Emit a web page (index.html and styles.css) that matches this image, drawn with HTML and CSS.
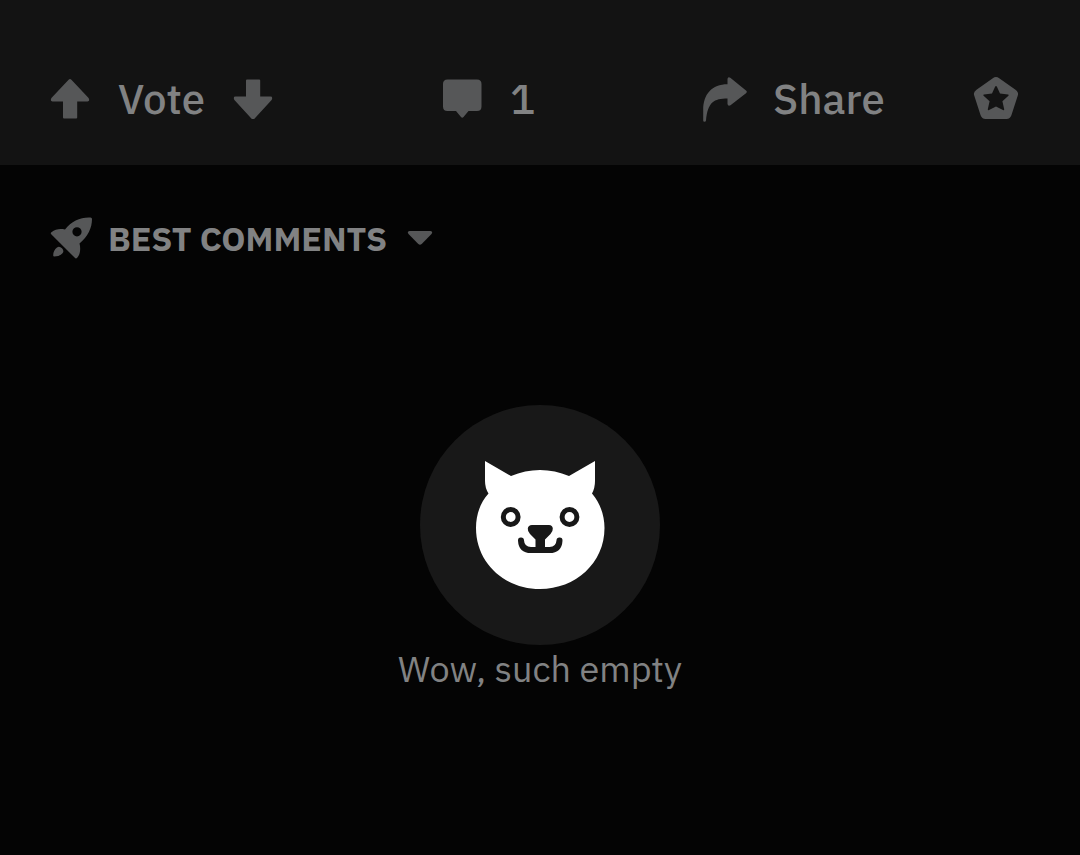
FILE: index.html
```
<!DOCTYPE html>
<html lang="en">
<head>
    <meta charset="UTF-8">
    <meta name="viewport" content="width=device-width, initial-scale=1.0">
    <title>Comments</title>
    <link rel="stylesheet" href="styles.css">
</head>
<body>
    <div class="action-bar">
        <div class="action-group">
            <button type="button" class="action" aria-label="Upvote">
                <svg class="icon" viewBox="0 0 40 40">
                    <path d="M18.6 .8Q20-.6 21.4 .8L38.6 19Q40.2 22.5 37.5 22.5H27.2V38.5Q27.2 39.5 26.2 39.5H14Q13 39.5 13 38.5V22.5H2.5Q-.2 22.5 1.4 19Z"/>
                </svg>
            </button>
            <span>Vote</span>
            <button type="button" class="action" aria-label="Downvote">
                <svg class="icon" viewBox="0 0 40 40">
                    <path d="M18.6 39.7Q20 41 21.4 39.7L38.6 21Q40.2 17.5 37.5 17.5H27.2V1.5Q27.2 .5 26.2 .5H14Q13 .5 13 1.5V17.5H2.5Q-.2 17.5 1.4 21Z"/>
                </svg>
            </button>
        </div>
        <button type="button" class="action" aria-label="1 comment">
            <svg class="icon" viewBox="0 0 40 40">
                <path d="M5.5 .5H35Q39.5 .5 39.5 5V27.5Q39.5 32 35 32H26.5L21.5 38Q20.2 39.3 19 38L14 32H5.5Q1 32 1 27.5V5Q1 .5 5.5 .5Z"/>
            </svg>
            <span>1</span>
        </button>
        <button type="button" class="action action-share">
            <svg class="icon icon-large" viewBox="0 0 48 48">
                <path d="M3.2 45.5V35C3.2 19 12 9.2 27.5 9.2V4Q27.8 1.3 30.3 2.7L46.3 15.7Q47.5 16.8 46.3 18L30.5 30.3Q28 31.6 27.5 29V23.5C14 23.5 7.8 27 6 45.5Q5.8 46.7 4.5 46.7Q3.2 46.7 3.2 45.5Z"/>
            </svg>
            <span>Share</span>
        </button>
        <button type="button" class="action" aria-label="Give award">
            <svg class="icon icon-large" viewBox="0 0 48 48">
                <path fill-rule="evenodd" d="M20.8 3.2Q24 .8 27.2 3.2L43.5 14.8Q47 17.2 45.8 20.5L39.4 40.3Q38.2 44 34.5 44H13.5Q9.8 44 8.6 40.3L2.2 20.5Q1 17.2 4.5 14.8ZM23.2 11.6L20 18.6L12 19.5Q10.8 19.8 11.6 20.8L17.6 26.2L15.8 34.2Q15.8 35.6 17 35L24 31.4L31 35Q32.2 35.6 32.2 34.2L30.4 26.2L36.4 20.8Q37.2 19.8 36 19.5L28 18.6L24.8 11.6Q24 10.2 23.2 11.6Z"/>
            </svg>
        </button>
    </div>

    <div class="comments">
        <button type="button" class="sort">
            <svg class="icon icon-rocket" viewBox="0 0 44 44">
                <path fill-rule="evenodd" d="M40.5 1.5Q42 1.5 42 3C42 12 38 20.5 29.5 27.5C31 33 30 39 27.2 41.7Q26 43 24.8 41.8L1.2 18.3Q.2 17.3 1.4 16.2C5.5 13 10 12.5 15 13.5C21.5 5 30.5 1 40.5 1.5ZM27 11.2A4.6 4.6 0 1 0 27 20.4A4.6 4.6 0 1 0 27 11.2Z"/>
                <path d="M7 31.5Q9.3 29.5 12 32.3Q14.5 35 12.5 37.3Q9.5 40.5 4.2 40.5Q3.2 40.5 3.2 39.5C3.2 36 4.5 33.5 7 31.5Z"/>
            </svg>
            <span>BEST COMMENTS</span>
            <svg class="icon icon-caret" viewBox="0 0 26 16">
                <path d="M2.5 1H23.5Q26.3 1.5 24.5 4L14.7 14Q13 15.5 11.3 14L1.5 4Q-.3 1.5 2.5 1Z"/>
            </svg>
        </button>

        <div class="empty">
            <svg class="empty-face" viewBox="0 0 240 240">
                <circle class="face-back" cx="120" cy="120" r="120"/>
                <path class="face-head" d="M65 56L91 71Q105 65 120 65Q135 65 149 71L175 56V76Q175 83 172 88.5C180 98 184.5 110 184.5 123C184.5 158 155.5 184 120 184C84.5 184 56 158 56 123C56 110 60 98 68.5 88.5Q65 83 65 76Z"/>
                <circle class="face-eye" cx="90.7" cy="112" r="7.4"/>
                <circle class="face-eye" cx="149.5" cy="112" r="7.4"/>
                <path class="face-nose" d="M112 120H129Q132.5 120 132.8 123.5Q133 126.5 130.5 129L125 134.5V146H115.5V134.5L110 129Q107.5 126.5 107.8 123.5Q108.2 120 112 120Z"/>
                <path class="face-mouth" d="M101 135.5Q101.5 145 111 145H129.5Q139 145 139.5 135.5"/>
            </svg>
            <p class="empty-text">Wow, such empty</p>
        </div>
    </div>
</body>
</html>
```
FILE: styles.css
```
* {
    box-sizing: border-box;
}

body {
    font-family: 'IBM Plex Sans', 'Noto Sans', sans-serif;
    margin: 0;
    min-height: 100vh;
    background-color: #040404;
    color: #818283;
}

button {
    padding: 0;
    border: 0;
    background: none;
    color: inherit;
    font: inherit;
    cursor: pointer;
}

.action-bar {
    display: grid;
    grid-template-columns: 392fr 258fr 272fr 48px;
    align-items: center;
    padding: 69px 60px 36px 50px;
    background-color: #131313;
    font-size: 42px;
    font-weight: 500;
    line-height: 60px;
}

.action-group,
.action {
    display: flex;
    align-items: center;
    gap: 28px;
}

.action-share {
    gap: 25px;
}

.icon {
    display: block;
    flex: none;
    width: 40px;
    height: 40px;
    fill: #565758;
}

.icon-large {
    width: 48px;
    height: 48px;
}

.comments {
    padding: 51px 50px;
}

.sort {
    display: flex;
    align-items: center;
    gap: 14px;
    font-size: 34px;
    font-weight: 700;
    line-height: 42px;
}

.icon-rocket {
    width: 44px;
    height: 44px;
}

.icon-caret {
    width: 26px;
    height: 16px;
    margin-left: 6px;
}

.empty {
    display: flex;
    flex-direction: column;
    align-items: center;
    margin-top: 145px;
}

.empty-face {
    width: 240px;
    height: 240px;
}

.face-back {
    fill: #181818;
}

.face-head {
    fill: #fff;
}

.face-nose {
    fill: #181818;
}

.face-eye,
.face-mouth {
    fill: none;
    stroke: #181818;
    stroke-width: 5;
    stroke-linecap: round;
}

.face-mouth {
    stroke-width: 6;
}

.empty-text {
    margin: 0;
    font-size: 36px;
    line-height: 48px;
}
```
